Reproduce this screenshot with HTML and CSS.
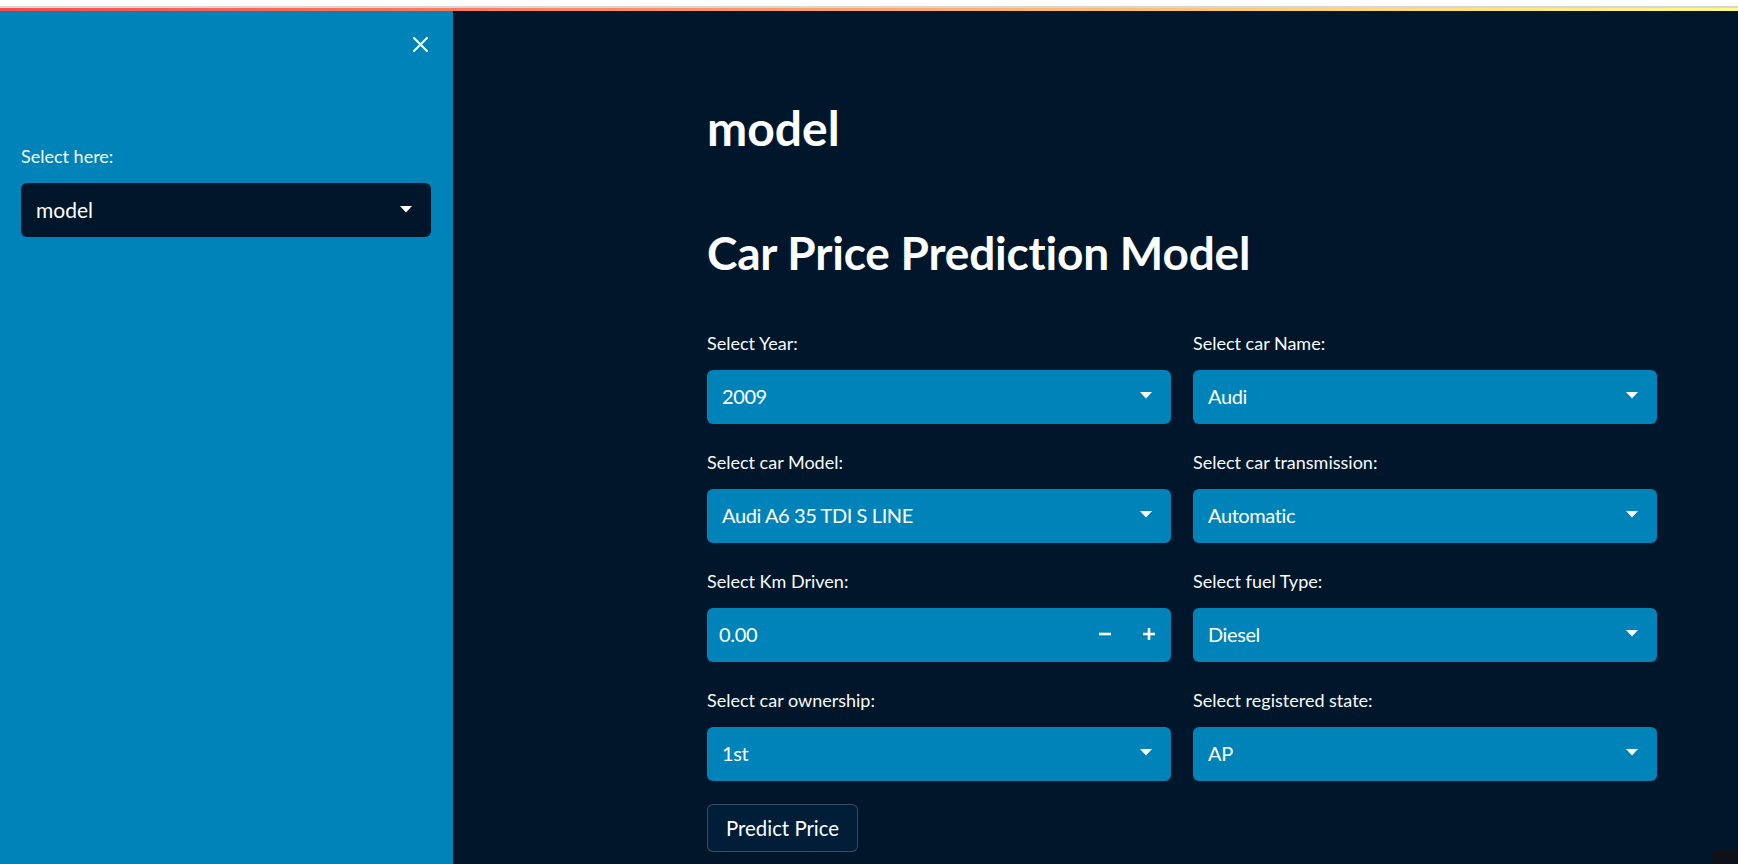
FILE: index.html
```html
<!DOCTYPE html>
<html lang="en">
<head>
<meta charset="utf-8">
<title>model</title>
<link rel="stylesheet" href="styles.css">
</head>
<body>
<div class="chrome"></div>
<div class="decoration"></div>
<div class="app">
  <aside class="sidebar">
    <div class="sidebar-head">
      <button class="close-btn" aria-label="Close sidebar">
        <svg width="15" height="15" viewBox="0 0 15 15"><path d="M1 1 L14 14 M14 1 L1 14" stroke="#fff" stroke-width="2" stroke-linecap="square" fill="none"/></svg>
      </button>
    </div>
    <div class="sidebar-content">
      <div class="field">
        <div class="label">Select here:</div>
        <div class="select dark">
          <span class="value side">model</span>
          <svg class="arrow" width="12" height="7" viewBox="0 0 12 7"><path d="M0 0 H12 L6 6.5 Z" fill="#fff"/></svg>
        </div>
      </div>
    </div>
  </aside>
  <main class="main">
    <h2 class="h-model">model</h2>
    <h2 class="h-title">Car Price Prediction Model</h2>
    <div class="form-grid">
      <div class="field">
        <div class="label">Select Year:</div>
        <div class="select"><span class="value">2009</span><svg class="arrow" width="12" height="7" viewBox="0 0 12 7"><path d="M0 0 H12 L6 6.5 Z" fill="#fff"/></svg></div>
      </div>
      <div class="field">
        <div class="label">Select car Name:</div>
        <div class="select"><span class="value">Audi</span><svg class="arrow" width="12" height="7" viewBox="0 0 12 7"><path d="M0 0 H12 L6 6.5 Z" fill="#fff"/></svg></div>
      </div>
      <div class="field">
        <div class="label">Select car Model:</div>
        <div class="select"><span class="value">Audi A6 35 TDI S LINE</span><svg class="arrow" width="12" height="7" viewBox="0 0 12 7"><path d="M0 0 H12 L6 6.5 Z" fill="#fff"/></svg></div>
      </div>
      <div class="field">
        <div class="label">Select car transmission:</div>
        <div class="select"><span class="value">Automatic</span><svg class="arrow" width="12" height="7" viewBox="0 0 12 7"><path d="M0 0 H12 L6 6.5 Z" fill="#fff"/></svg></div>
      </div>
      <div class="field">
        <div class="label">Select Km Driven:</div>
        <div class="number">
          <span class="num-value">0.00</span>
          <span class="step"><svg width="12" height="12" viewBox="0 0 12 12"><path d="M0 6 H12" stroke="#fff" stroke-width="2.6" fill="none"/></svg></span>
          <span class="step"><svg width="12" height="12" viewBox="0 0 12 12"><path d="M0 6 H12 M6 0 V12" stroke="#fff" stroke-width="2.6" fill="none"/></svg></span>
        </div>
      </div>
      <div class="field">
        <div class="label">Select fuel Type:</div>
        <div class="select"><span class="value">Diesel</span><svg class="arrow" width="12" height="7" viewBox="0 0 12 7"><path d="M0 0 H12 L6 6.5 Z" fill="#fff"/></svg></div>
      </div>
      <div class="field">
        <div class="label">Select car ownership:</div>
        <div class="select"><span class="value">1st</span><svg class="arrow" width="12" height="7" viewBox="0 0 12 7"><path d="M0 0 H12 L6 6.5 Z" fill="#fff"/></svg></div>
      </div>
      <div class="field">
        <div class="label">Select registered state:</div>
        <div class="select"><span class="value">AP</span><svg class="arrow" width="12" height="7" viewBox="0 0 12 7"><path d="M0 0 H12 L6 6.5 Z" fill="#fff"/></svg></div>
      </div>
    </div>
    <button class="predict">Predict Price</button>
  </main>
</div>
<div class="corner"></div>
</body>
</html>
```
FILE: styles.css
```css
html, body {
  margin: 0;
  padding: 0;
  height: 864px;
  overflow: hidden;
  background: #00172b;
  font-family: "Lato", "Source Sans Pro", "Noto Sans", sans-serif;
  color: #fff;
}

.chrome {
  height: 6px;
  background: #ffffff;
  border-bottom: 2px solid #d6d6d6;
}

.decoration {
  height: 3px;
  background: linear-gradient(90deg, #ff4b4b, #fffd80);
}

.app {
  display: flex;
  height: 853px;
}

.sidebar {
  width: 453px;
  flex-shrink: 0;
  background: #0083b8;
  box-sizing: border-box;
  padding: 0 22px 0 21px;
}

.sidebar-head {
  display: flex;
  justify-content: flex-end;
  padding: 26px 3px 0 0;
}

.close-btn {
  background: none;
  border: 0;
  padding: 0;
  width: 15px;
  height: 15px;
  display: block;
}

.close-btn svg {
  display: block;
}

.sidebar-content {
  padding-top: 92px;
}

.field {
  display: flex;
  flex-direction: column;
}

.label {
  font-size: 18px;
  line-height: 24px;
  margin-bottom: 15px;
  color: #fafafa;
}

.select {
  height: 54px;
  box-sizing: border-box;
  border-radius: 6px;
  background: #0083b8;
  display: flex;
  align-items: center;
  padding: 0 19px 2px 15px;
}

.select.dark {
  background: #00172b;
}

.value {
  flex: 1;
  font-size: 20px;
  letter-spacing: -0.4px;
  white-space: nowrap;
}

.value.side {
  font-size: 21px;
  letter-spacing: 0;
}

.arrow {
  display: block;
  flex-shrink: 0;
}

.main {
  flex: 1;
  padding: 0 0 0 254px;
  box-sizing: border-box;
  width: 0;
}

.main h2 {
  margin: 0;
  line-height: 1.2;
  font-weight: 700;
  white-space: nowrap;
}

.h-model {
  font-size: 48px;
  padding-top: 88px;
}

.h-title {
  font-size: 46px;
  letter-spacing: -0.2px;
  margin-top: 68px !important;
}

.form-grid {
  display: grid;
  grid-template-columns: 464px 464px;
  column-gap: 22px;
  row-gap: 26px;
  margin-top: 51px;
}

.number {
  height: 54px;
  box-sizing: border-box;
  border-radius: 6px;
  background: #0083b8;
  display: flex;
  align-items: center;
  padding: 0 0 2px 12px;
}

.num-value {
  flex: 1;
  font-size: 20px;
  letter-spacing: -0.3px;
}

.step {
  width: 44px;
  height: 100%;
  display: flex;
  align-items: center;
  justify-content: center;
}

.step svg {
  display: block;
}

.predict {
  margin-top: 23px;
  height: 48px;
  padding: 0 18px;
  background: #001e38;
  border: 1px solid rgba(250, 250, 250, 0.22);
  border-radius: 6px;
  color: #fff;
  font-family: inherit;
  font-size: 20.4px;
}

.corner {
  position: fixed;
  right: 0;
  bottom: 0;
  width: 26px;
  height: 14px;
  background: #0e1117;
  border-top-left-radius: 6px;
}
```
